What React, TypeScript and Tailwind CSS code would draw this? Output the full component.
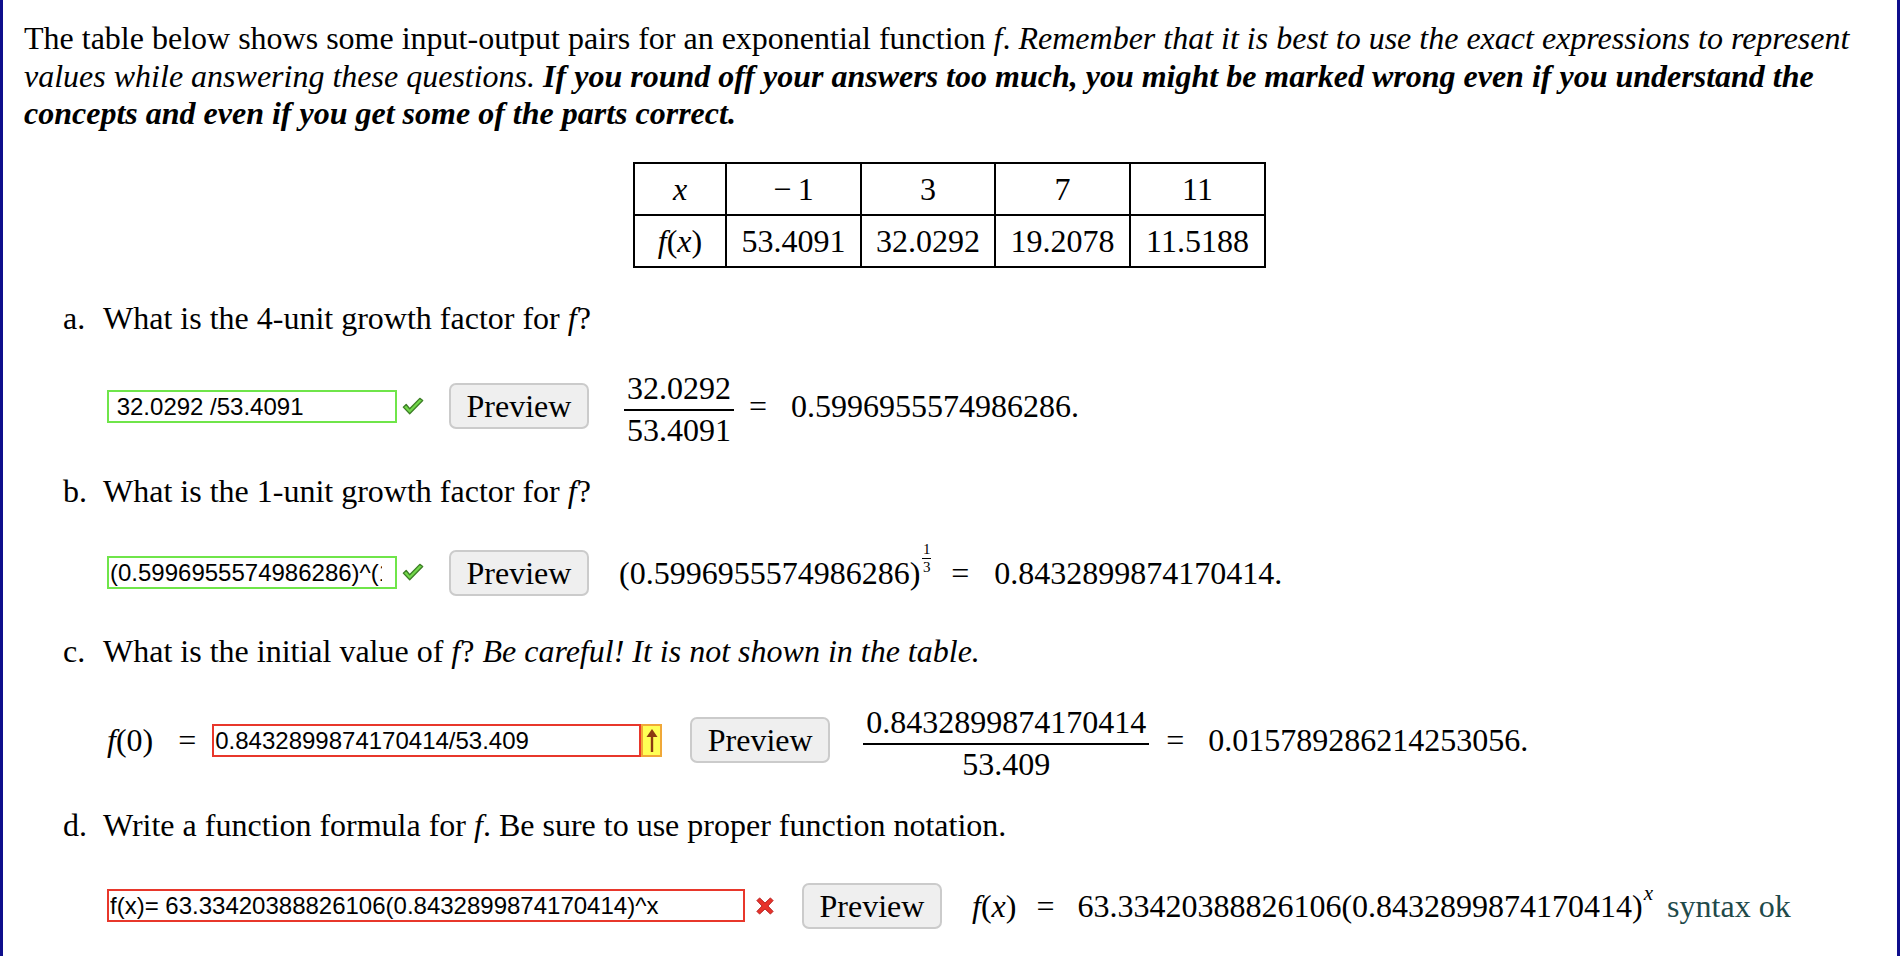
import React from "react";

const serif = "font-['Liberation_Serif','Times_New_Roman',serif]";
const sans = "font-['Liberation_Sans',Arial,sans-serif]";

function Check() {
  return (
    <svg width="22" height="19" viewBox="0 0 20 16" className="shrink-0">
      <path d="M1.2 8.6 L7 14.6 L18.8 2.6 L16.2 0.6 L7 10 L3.8 6.2 Z" fill="#72d84a" stroke="#3d7d27" strokeWidth="1.2" strokeLinejoin="round" />
    </svg>
  );
}

function Cross() {
  return (
    <svg width="18" height="18" viewBox="0 0 16 16" className="shrink-0">
      <path d="M3.2 0.8 L8 5.4 L12.8 0.8 L15.2 3.2 L10.6 8 L15.2 12.8 L12.8 15.2 L8 10.6 L3.2 15.2 L0.8 12.8 L5.4 8 L0.8 3.2 Z" fill="#e8322a" stroke="#b01818" strokeWidth="0.8" strokeLinejoin="round" />
    </svg>
  );
}

function Warn() {
  return (
    <div className="w-[21px] h-[33px] bg-[#ffff55] border-2 border-[#f0a838] flex items-center justify-center shrink-0">
      <svg width="14" height="26" viewBox="0 0 14 26">
        <line x1="7" y1="8" x2="7" y2="25" stroke="#8b3a12" strokeWidth="2.4" />
        <polygon points="1.5,10 7,2 12.5,10" fill="#8b3a12" />
      </svg>
    </div>
  );
}

function Preview({ className = "" }: { className?: string }) {
  return (
    <div
      className={`w-[140px] h-[46px] shrink-0 rounded-[7px] border-2 border-[#cbcbcb] bg-[#efefef] flex items-center justify-center text-[32px] text-black ${serif} ${className}`}
    >
      Preview
    </div>
  );
}

function AnswerBox({
  value,
  w,
  color,
  clip = "w-full",
}: {
  value: string;
  w: string;
  color: "green" | "red";
  clip?: string;
}) {
  return (
    <div
      className={`${w} h-[33px] shrink-0 overflow-hidden border-2 ${
        color === "green" ? "border-[#6fe54a]" : "border-[#e8372b]"
      } bg-white px-[1px] text-[24px] leading-[29px] text-black ${sans}`}
    >
      <div className={`${clip} overflow-hidden whitespace-pre`}>{value}</div>
    </div>
  );
}

function Frac({ num, den }: { num: string; den: string }) {
  return (
    <span className="inline-flex flex-col items-center">
      <span className="px-[3px] leading-[36px]">{num}</span>
      <span className="w-full h-[2px] bg-black mt-[3px] mb-[1px]" />
      <span className="px-[3px] leading-[36px]">{den}</span>
    </span>
  );
}

function Q({ label, children, className = "" }: { label: string; children: React.ReactNode; className?: string }) {
  return (
    <div className={`flex text-[32px] leading-[37.5px] ${className}`}>
      <span className="w-[40px] pl-[39px] box-content shrink-0">{label}</span>
      <span>{children}</span>
    </div>
  );
}

export default function App() {
  const cell = "border-2 border-black text-center h-[52px] px-0";
  return (
    <div className={`h-[956px] w-[1900px] overflow-hidden bg-white border-l-[3px] border-r-[3px] border-[#0f0f8c] text-black ${serif}`}>
      <div className="pl-[21px] pr-[36px] pt-[20px]">
        <p className="text-[32px] leading-[37.5px]">
          The table below shows some input-output pairs for an exponential function <i>f</i>.{" "}
          <i>Remember that it is best to use the exact expressions to represent values while answering these questions.</i>{" "}
          <b>
            <i>
              If you round off your answers too much, you might be marked wrong even if you understand the concepts and
              even if you get some of the parts correct.
            </i>
          </b>
        </p>

        <div className="flex justify-center mt-[29px] pl-[14px]">
          <table className="border-collapse text-[32px] leading-none">
            <tbody>
              <tr>
                <td className={`${cell} w-[92px]`}><i>x</i></td>
                <td className={`${cell} w-[135px]`}>−&thinsp;1</td>
                <td className={`${cell} w-[134px]`}>3</td>
                <td className={`${cell} w-[135px]`}>7</td>
                <td className={`${cell} w-[135px]`}>11</td>
              </tr>
              <tr>
                <td className={cell}><i>f</i>(<i>x</i>)</td>
                <td className={cell}>53.4091</td>
                <td className={cell}>32.0292</td>
                <td className={cell}>19.2078</td>
                <td className={cell}>11.5188</td>
              </tr>
            </tbody>
          </table>
        </div>

        {/* a */}
        <Q label="a." className="mt-[32px]">
          What is the 4-unit growth factor for <i>f</i>?
        </Q>
        <div className="mt-[29px] h-[80px] pl-[83px] flex items-center text-[32px]">
          <AnswerBox value=" 32.0292 /53.4091" w="w-[290px]" color="green" />
          <span className="ml-[5px]"><Check /></span>
          <Preview className="ml-[25px]" />
          <span className="ml-[35px]"><Frac num="32.0292" den="53.4091" /></span>
          <span className="ml-[15px]">=</span>
          <span className="ml-[24px]">0.5996955574986286.</span>
        </div>

        {/* b */}
        <Q label="b." className="mt-[27px]">
          What is the 1-unit growth factor for <i>f</i>?
        </Q>
        <div className="mt-[32px] h-[60px] pl-[83px] flex items-center text-[32px]">
          <AnswerBox value="(0.5996955574986286)^(1/3)" w="w-[290px]" color="green" clip="w-[272px]" />
          <span className="ml-[5px]"><Check /></span>
          <Preview className="ml-[25px]" />
          <span className="ml-[30px] flex items-center">
            <span>(0.5996955574986286)</span>
            <span className="inline-flex flex-col items-center text-[15px] leading-[15px] -translate-y-[14px] ml-[2px]">
              <span>1</span>
              <span className="w-[9px] h-[1px] bg-black my-[1px]" />
              <span>3</span>
            </span>
          </span>
          <span className="ml-[20px]">=</span>
          <span className="ml-[25px]">0.8432899874170414.</span>
        </div>

        {/* c */}
        <Q label="c." className="mt-[30px]">
          What is the initial value of <i>f</i>? <i>Be careful! It is not shown in the table.</i>
        </Q>
        <div className="mt-[30px] h-[80px] pl-[83px] flex items-center text-[32px]">
          <span>
            <i>f</i>(0)
          </span>
          <span className="ml-[25px]">=</span>
          <span className="ml-[16px] flex items-center">
            <AnswerBox value="0.8432899874170414/53.409" w="w-[429px]" color="red" />
            <Warn />
          </span>
          <Preview className="ml-[28px] w-[137px]" />
          <span className="ml-[33px]"><Frac num="0.8432899874170414" den="53.409" /></span>
          <span className="ml-[17px]">=</span>
          <span className="ml-[24px]">0.015789286214253056.</span>
        </div>

        {/* d */}
        <Q label="d." className="mt-[27px]">
          Write a function formula for <i>f</i>. Be sure to use proper function notation.
        </Q>
        <div className="mt-[31px] h-[60px] pl-[83px] flex items-center text-[32px]">
          <AnswerBox value="f(x)= 63.33420388826106(0.8432899874170414)^x" w="w-[638px]" color="red" />
          <span className="ml-[11px]"><Cross /></span>
          <Preview className="ml-[28px]" />
          <span className="ml-[30px] flex items-center whitespace-nowrap">
            <span>
              <i>f</i>(<i>x</i>)
            </span>
            <span className="ml-[20px]">=</span>
            <span className="ml-[23px]">63.33420388826106(0.8432899874170414)</span>
            <i className="text-[21px] -translate-y-[12px] ml-[1px]">x</i>
            <span className="ml-[14px] text-[32px] text-[#1f4a4a]">syntax ok</span>
          </span>
        </div>
      </div>
    </div>
  );
}
